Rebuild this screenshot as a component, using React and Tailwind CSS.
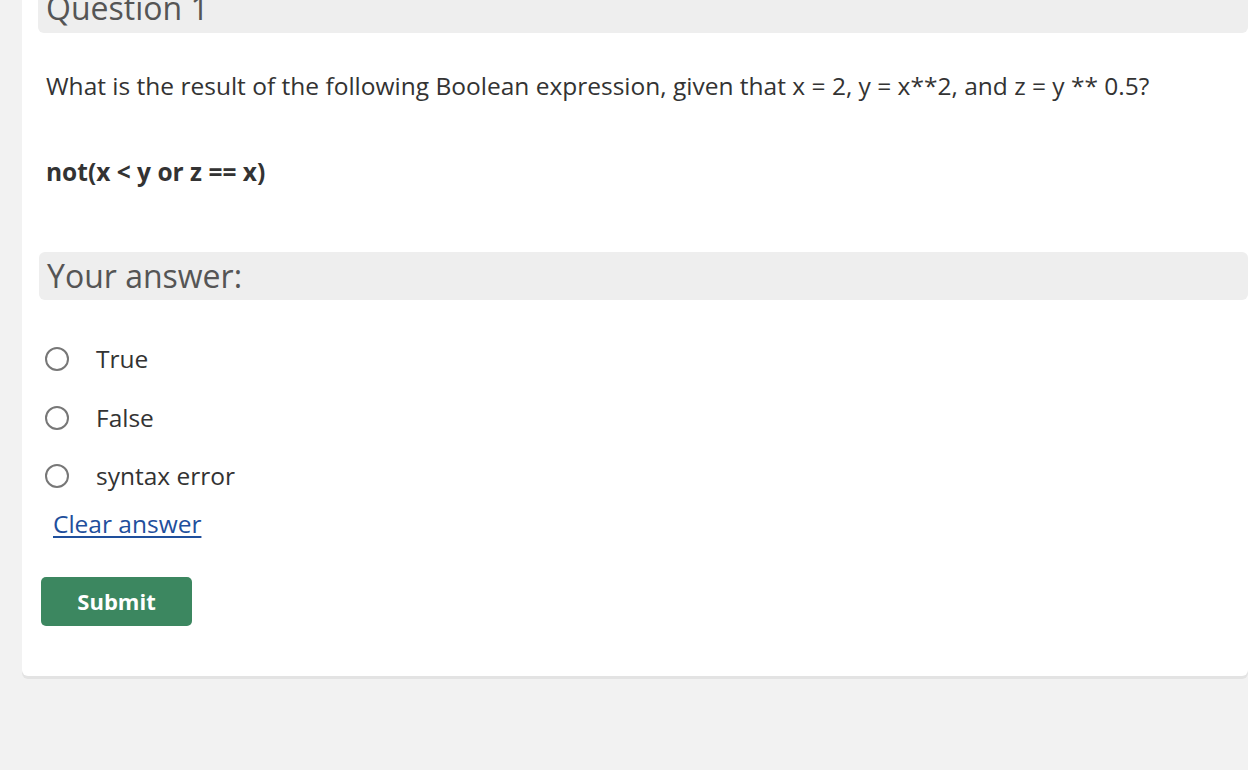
import React, { useState } from 'react';

const options = ['True', 'False', 'syntax error'];

export default function App() {
  const [choice, setChoice] = useState(null);

  return (
    <div className="min-h-[770px] bg-[#f2f2f2] overflow-hidden" style={{ fontFamily: '"Open Sans", "Liberation Sans", sans-serif' }}>
      <div className="ml-[22px] -mt-[40px] pt-[12px] pl-[16px] pb-[50px] bg-white rounded-b-[6px] shadow-[0_3px_0_#e3e3e3] text-[#333]">
        {/* Question header (scrolled partly out of view) */}
        <div className="bg-[#eeeeee] rounded-[6px] pl-[8px] h-[61px] flex items-end pb-[5px]">
          <h2 className="text-[32px] leading-[40px] text-[#555]">Question 1</h2>
        </div>

        <p className="mt-[37px] pl-[8px] text-[24.5px] leading-[32px] text-[#333]">
          What is the result of the following Boolean expression, given that x = 2, y = x**2, and z = y ** 0.5?
        </p>

        <p className="mt-[54px] pl-[8px] text-[24.5px] leading-[32px] font-bold text-[#333]">
          not(x &lt; y or z == x)
        </p>

        <div className="mt-[64px] bg-[#eeeeee] rounded-[6px] h-[48px] flex items-center pl-[8px] ml-[1px]">
          <h3 className="text-[32px] leading-[40px] text-[#555]">Your answer:</h3>
        </div>

        <div className="mt-[43px] flex flex-col gap-[26.5px] pl-[7px]">
          {options.map((opt) => (
            <label key={opt} className="flex items-center cursor-pointer h-[32px]">
              <span className="w-[24px] h-[24px] rounded-full border-2 border-[#777] flex items-center justify-center">
                {choice === opt && <span className="w-[12px] h-[12px] rounded-full bg-[#333]" />}
              </span>
              <input type="radio" name="q1" className="hidden" checked={choice === opt} onChange={() => setChoice(opt)} />
              <span className="ml-[27px] text-[24.5px] leading-[32px] text-[#333]">{opt}</span>
            </label>
          ))}
        </div>

        <button onClick={() => setChoice(null)} className="mt-[16px] ml-[15px] text-[24.5px] leading-[32px] text-[#1f4f9c] underline underline-offset-[3px] decoration-[2px]">
          Clear answer
        </button>

        <div className="mt-[37px] ml-[3px]">
          <button className="w-[151px] h-[49px] bg-[#3c8760] rounded-[5px] text-white font-bold text-[22px]">
            Submit
          </button>
        </div>
      </div>
    </div>
  );
}
